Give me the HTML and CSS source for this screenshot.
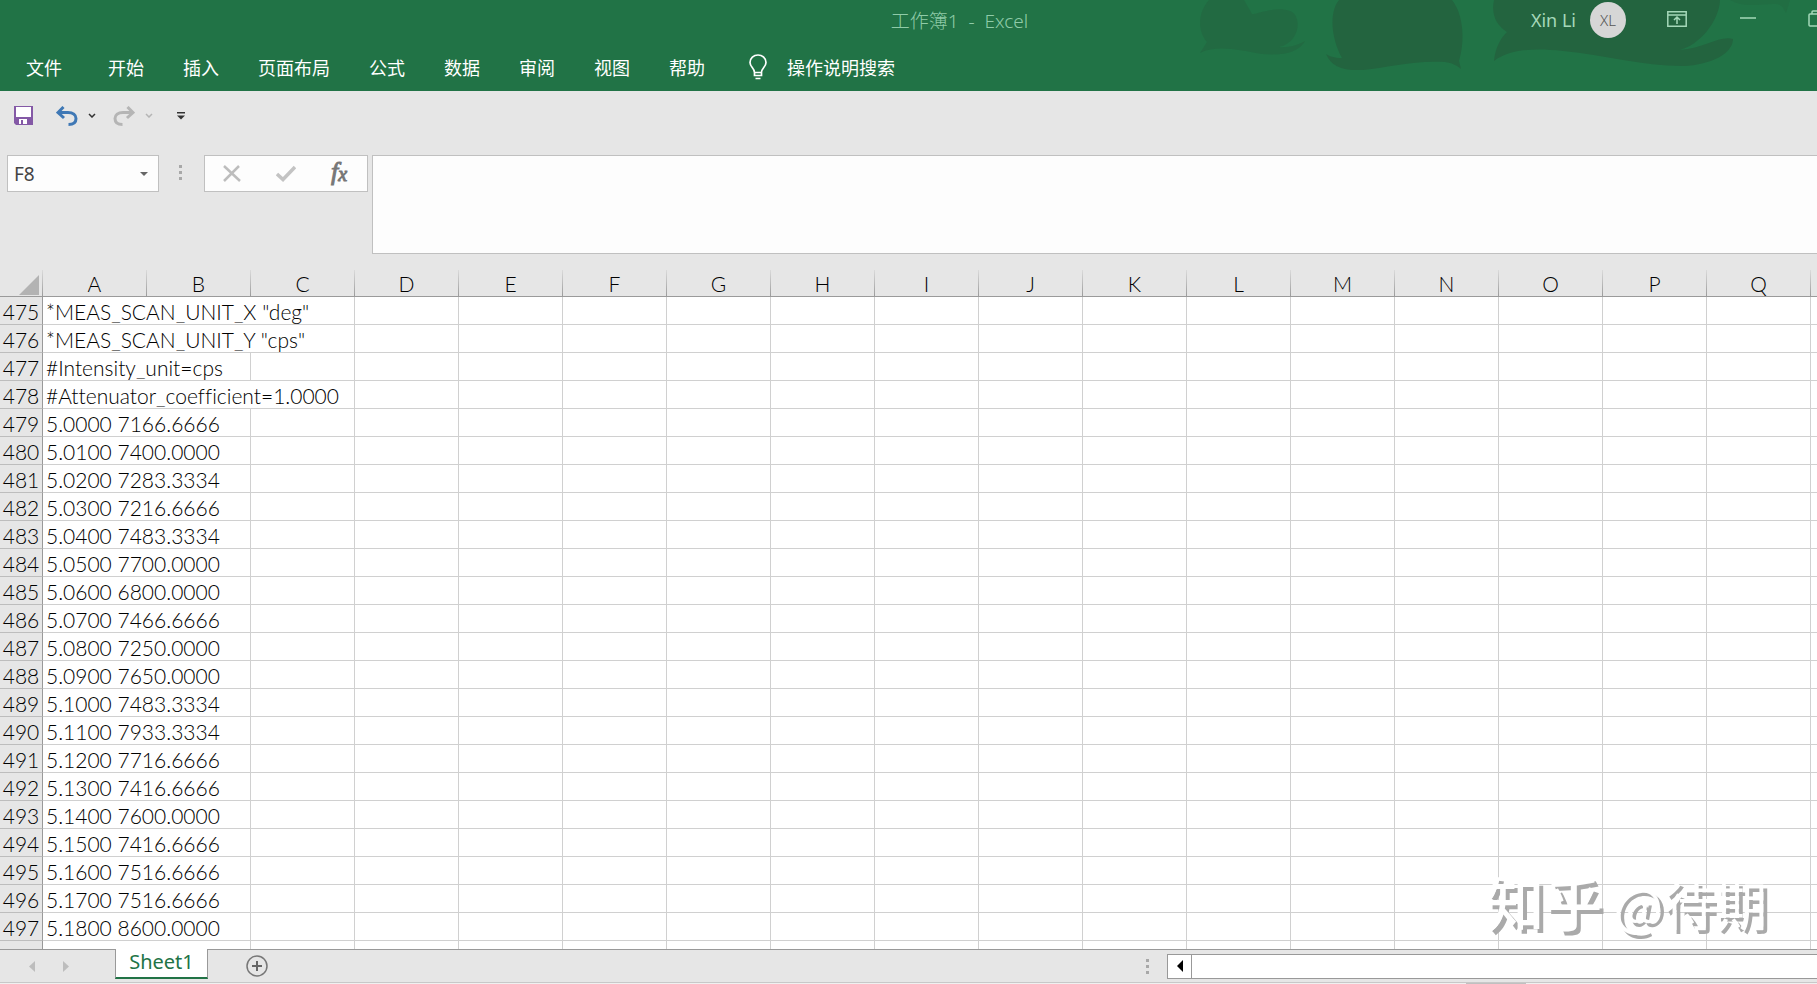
FILE: index.html
```html
<!DOCTYPE html>
<html lang="zh-CN">

<head>
  <meta charset="UTF-8" />
  <title>工作簿1 - Excel</title>
  <link rel="stylesheet" href="styles.css">
</head>

<body>
  <header class="ribbon">
    <!-- speech bubble decoration -->
    <svg class="bubbles" width="637" height="91" viewBox="0 0 637 91">
      <path opacity=".6" d="M29 0C18 12 17 31 27 42L20 53C38 44 62 51 82 54C104 56 119 52 125 41C118 45 108 48 99 47C121 42 122 15 110 11C96 6 77 14 72 14L64 0Z" />
      <path d="M159 0C149 12 151 38 162 58C154 58 149 56 146 54C151 66 162 71 183 70C210 67 235 60 265 62C272 63 276 65 281 69L279 61C285 42 284 15 272 0Z" />
      <path d="M314 0C311 14 316 25 327 32C319 40 315 50 314 61C330 49 354 48 383 51C425 55 461 66 503 66C532 65 553 53 553 39C540 35 525 48 500 50C519 45 539 22 540 0Z" />
      <path opacity=".35" d="M550 0C565 9 584 3 596 4C602 4 604 9 606 13L610 0Z" />
    </svg>

    <div class="title-bar">
      <span class="doc-title">工作簿1&nbsp; - &nbsp;Excel</span>
      <div class="account">
        <span class="user">Xin Li</span>
        <span class="avatar">XL</span>
        <button class="win-btn display" aria-label="功能区显示选项">
          <svg width="20" height="16" viewBox="0 0 20 16"><path d="M.8.8h18.4v14.4H.8zM1 4h18M10 13V6M7 9l3-3 3 3" /></svg>
        </button>
        <button class="win-btn minimize" aria-label="最小化">
          <svg width="16" height="16" viewBox="0 0 16 16"><path d="M0 7h16" /></svg>
        </button>
        <button class="win-btn restore" aria-label="还原">
          <svg width="18" height="18" viewBox="0 0 18 18"><path d="M1 5q0-1 1-1h10q1 0 1 1v10q0 1-1 1H2q-1 0-1-1zM4 4V2q0-1 1-1h10q1 0 1 1v10q0 1-1 1h-2" /></svg>
        </button>
      </div>
    </div>

    <nav class="tabs">
      <button class="file">文件</button>
      <button>开始</button>
      <button>插入</button>
      <button>页面布局</button>
      <button>公式</button>
      <button>数据</button>
      <button>审阅</button>
      <button>视图</button>
      <button>帮助</button>
      <button class="tell-me">
        <svg width="18" height="26" viewBox="0 0 18 26"><path d="M5.500 18.500C5.500 14 1 13 1 8.500a8 7.500 0 0 1 16 0C17 13 12.500 14 12.500 18.500zM5.500 18.500v3h7v-3M6.500 24.500h5" /></svg>
        操作说明搜索
      </button>
    </nav>
  </header>

  <div class="quick-access">
    <button class="save" aria-label="保存">
      <svg width="19" height="19" viewBox="0 0 19 19"><path fill="#8459a6" d="M0 0h19v19H2L0 17z" /><path fill="#fff" d="M2 1h15v10H2zM5 13h8v5H9v-4H7v4H5z" /></svg>
    </button>
    <button class="undo" aria-label="撤消">
      <svg width="22" height="20" viewBox="0 0 22 20"><path d="M7.500 1L2 6.500 8 12M2.500 6.500H12c5 0 8 2.500 8 6 0 4-3 6-7.500 6" /></svg>
    </button>
    <button class="chevron" aria-label="撤消列表">
      <svg width="8" height="5" viewBox="0 0 8 5"><path d="M1 1l3 3 3-3" /></svg>
    </button>
    <button class="redo" aria-label="恢复">
      <svg width="22" height="20" viewBox="0 0 22 20"><path d="M14.500 1L20 6.500 14 12M19.500 6.500H10c-5 0-8 2.500-8 6 0 4 3 6 7.500 6" /></svg>
    </button>
    <button class="chevron off" aria-label="恢复列表">
      <svg width="8" height="5" viewBox="0 0 8 5"><path d="M1 1l3 3 3-3" /></svg>
    </button>
    <button class="customize" aria-label="自定义快速访问工具栏">
      <svg width="8" height="8" viewBox="0 0 8 8"><path fill="#333" d="M0 0h8v1.500H0zM0 3.500h8L4 7.500z" /></svg>
    </button>
  </div>

  <div class="formula-row">
    <div class="name-box">
      <input type="text" value="F8" aria-label="名称框" />
      <button aria-label="名称列表">
        <svg width="8" height="4" viewBox="0 0 8 4"><path fill="#666" d="M0 0h8L4 4z" /></svg>
      </button>
    </div>
    <span class="grip"></span>
    <div class="formula-tools">
      <button aria-label="取消">
        <svg width="18" height="17" viewBox="0 0 18 17"><path fill="none" stroke="#bdbdbd" stroke-width="2.500" d="M1 1l16 15M16 1L1 16" /></svg>
      </button>
      <button aria-label="输入">
        <svg width="20" height="17" viewBox="0 0 20 17"><path fill="none" stroke="#c3c3c3" stroke-width="3.500" d="M1 9l6 5.500L19 2" /></svg>
      </button>
      <button class="fx" aria-label="插入函数">f<span>x</span></button>
    </div>
    <textarea class="formula" aria-label="编辑栏"></textarea>
  </div>

  <main class="grid">
    <table>
      <colgroup id="cols"></colgroup>
      <thead>
        <tr id="letters">
          <th class="corner"><svg width="20" height="20" viewBox="0 0 20 20"><path fill="#b3b3b3" d="M20 0v20H0z" /></svg></th>
        </tr>
      </thead>
      <tbody id="rows"></tbody>
    </table>
    <div class="watermark"><span>知乎</span> @待期</div>
  </main>

  <footer class="sheet-bar">
    <div class="sheet-nav">
      <button aria-label="上一个工作表"><svg width="6" height="11" viewBox="0 0 6 11"><path fill="#bdbdbd" d="M6 0v11L0 5.500z" /></svg></button>
      <button aria-label="下一个工作表"><svg width="6" height="11" viewBox="0 0 6 11"><path fill="#bdbdbd" d="M0 0v11l6-5.500z" /></svg></button>
    </div>
    <button class="sheet-tab">Sheet1</button>
    <button class="add-sheet" aria-label="新工作表">
      <svg width="22" height="22" viewBox="0 0 22 22"><circle cx="11" cy="11" r="10" fill="none" stroke="#777" stroke-width="1.500" /><path stroke="#666" stroke-width="2" d="M6 11h10M11 6v10" /></svg>
    </button>
    <span class="grip"></span>
    <div class="scroll">
      <button aria-label="向左滚动"><svg width="6" height="12" viewBox="0 0 6 12"><path d="M6 0v12L0 6z" /></svg></button>
    </div>
  </footer>
  <div class="status"><span></span></div>

  <script>
    // the last column is only partly in view and has no letter
    const letters = [..."ABCDEFGHIJKLMNOPQ", ""];
    const firstRow = 475;

    // text and how many columns it runs over
    const data = [
      ['*MEAS_SCAN_UNIT_X "deg"', 3],
      ['*MEAS_SCAN_UNIT_Y "cps"', 3],
      ["#Intensity_unit=cps", 2],
      ["#Attenuator_coefficient=1.0000", 3],
      ["5.0000 7166.6666", 2],
      ["5.0100 7400.0000", 2],
      ["5.0200 7283.3334", 2],
      ["5.0300 7216.6666", 2],
      ["5.0400 7483.3334", 2],
      ["5.0500 7700.0000", 2],
      ["5.0600 6800.0000", 2],
      ["5.0700 7466.6666", 2],
      ["5.0800 7250.0000", 2],
      ["5.0900 7650.0000", 2],
      ["5.1000 7483.3334", 2],
      ["5.1100 7933.3334", 2],
      ["5.1200 7716.6666", 2],
      ["5.1300 7416.6666", 2],
      ["5.1400 7600.0000", 2],
      ["5.1500 7416.6666", 2],
      ["5.1600 7516.6666", 2],
      ["5.1700 7516.6666", 2],
      ["5.1800 8600.0000", 2],
      ["", 2]
    ];

    document.getElementById("cols").innerHTML =
      '<col class="head-col">' + "<col>".repeat(letters.length);
    document.getElementById("letters").innerHTML +=
      letters.map(l => `<th>${l}</th>`).join("");
    document.getElementById("rows").innerHTML = data.map(([text, span], i) => `
      <tr>
        <th>${text ? firstRow + i : ""}</th>
        <td colspan="${span}">${text}</td>
        ${"<td></td>".repeat(letters.length - span)}
      </tr>`).join("");
  </script>
</body>

</html>
```
FILE: styles.css
```css
:root {
  --green: #217346;
  --green-dark: #23643f;
  --mint: #a5d8b9;
  --chrome: #e6e6e6;
  --line: #d0d0d0;
  --edge: #999;
  --ui: "Noto Sans", "Noto Sans CJK SC", sans-serif;
  --cjk: "Noto Sans CJK SC", sans-serif;
  --cell: Lato, "Noto Sans CJK SC", sans-serif;
}
* {
  box-sizing: border-box;
  margin: 0;
  padding: 0;
}
body {
  display: flex;
  flex-direction: column;
  height: 100vh;
  overflow: hidden;
  background: var(--chrome);
  font-family: var(--ui);
  font-size: 18px;
}
button {
  display: flex;
  align-items: center;
  justify-content: center;
  border: none;
  background: none;
  color: inherit;
  font: inherit;
  cursor: pointer;
}
svg {
  display: block;
  flex: none;
}

/* Green ribbon */
.ribbon {
  position: relative;
  flex: none;
  background: var(--green);
  color: #fff;
}
.bubbles {
  position: absolute;
  top: 0;
  right: 0;
  fill: var(--green-dark);
}
.title-bar {
  position: relative;
  display: grid;
  grid-template-columns: 1fr auto 1fr;
  align-items: center;
  height: 40px;
  color: var(--mint);
}
.doc-title {
  grid-column: 2;
  padding-left: 102px;
  font-size: 19px;
  font-weight: 300;
  color: #8fcba8;
}
.account {
  display: flex;
  align-items: center;
  justify-content: flex-end;
  overflow: hidden;
}
.user {
  margin-right: 14px;
}
.avatar {
  width: 36px;
  height: 36px;
  margin-right: 41px;
  border-radius: 50%;
  background: #d6d6d6;
  color: #555;
  font-size: 15px;
  font-weight: 300;
  line-height: 36px;
  text-align: center;
}
.win-btn {
  padding-bottom: 3px;
}
.win-btn svg {
  fill: none;
  stroke: var(--mint);
  stroke-width: 1.5;
}
.display {
  margin-right: 53px;
}
.minimize {
  margin-right: 52px;
}
.restore {
  margin-right: -9px;
}
.tabs {
  position: relative;
  display: flex;
  gap: 39px;
  height: 51px;
  padding: 2px 26px 0;
  font-family: var(--cjk);
}
.tabs .file {
  margin-right: 7px;
}
.tell-me {
  gap: 20px;
  margin-left: 5px;
}
.tell-me svg {
  fill: none;
  stroke: #fff;
  stroke-width: 1.7;
}

/* Quick access toolbar */
.quick-access {
  display: flex;
  flex: none;
  align-items: center;
  height: 64px;
  padding: 0 14px 15px;
}
.undo {
  margin-left: 23px;
}
.undo svg,
.redo svg {
  fill: none;
  stroke: #3f78b5;
  stroke-width: 3;
}
.redo {
  margin-left: 17px;
}
.redo svg {
  stroke: #b5b5b5;
}
.chevron {
  margin-left: 10px;
}
.chevron svg {
  fill: none;
  stroke: #333;
  stroke-width: 1.5;
}
.chevron.off svg {
  stroke: #b5b5b5;
}
.customize {
  margin-left: 24px;
}

/* Formula bar */
.formula-row {
  display: flex;
  flex: none;
  align-items: flex-start;
  height: 99px;
  padding-left: 7px;
}
.name-box,
.formula-tools,
.formula {
  border: 1px solid #c0c0c0;
  background: #fdfdfd;
}
.name-box {
  display: flex;
  width: 152px;
  height: 37px;
}
.name-box input {
  flex: 1;
  min-width: 0;
  padding-left: 6px;
  border: none;
  outline: none;
  background: none;
  color: #444;
  font: inherit;
  font-size: 19px;
}
.name-box button {
  width: 28px;
}
.grip {
  flex: none;
  width: 3px;
  height: 15px;
  background: repeating-linear-gradient(#a8a8a8 0 3px, transparent 3px 6px);
}
.formula-row .grip {
  margin: 10px 22px 0 20px;
}
.formula-tools {
  display: flex;
  width: 164px;
  height: 37px;
  padding-right: 1px;
}
.formula-tools button {
  flex: 1;
}
.formula-tools .fx {
  padding-bottom: 3px;
  color: #777;
  font-family: "Liberation Serif", serif;
  font-size: 26px;
  font-style: italic;
  -webkit-text-stroke: 1px #777;
}
.fx span {
  padding-top: 4px;
  font-size: 20px;
}
.formula {
  flex: 1;
  height: 99px;
  margin-left: 4px;
  border-right: none;
  outline: none;
  resize: none;
}

/* Cells */
.grid {
  position: relative;
  flex: 1;
  min-height: 0;
  padding-top: 16px;
  overflow: hidden;
}
.grid table {
  width: 1915px;
  border-spacing: 0;
  table-layout: fixed;
  font-family: var(--cell);
  font-size: 21px;
  font-variant-ligatures: none;
  font-weight: 300;
  line-height: 25px;
  color: #000;
}
.head-col {
  width: 43px;
}
.grid th {
  padding-top: 2px;
  font-weight: 300;
}
.grid thead th {
  height: 27px;
  border-right: 1px solid;
  border-bottom: 1px solid var(--edge);
  border-image: linear-gradient(#ddd, #999) 1;
  line-height: 24px;
}
.grid .corner svg {
  margin: 1px 0 0 19px;
}
.grid tbody th {
  border-right: 1px solid var(--edge);
  border-bottom: 1px solid #bdbdbd;
}
.grid td {
  height: 28px;
  padding: 2px 0 0 3px;
  border-right: 1px solid var(--line);
  border-bottom: 1px solid var(--line);
  background: #fff;
  white-space: nowrap;
}
.watermark {
  position: absolute;
  right: 50px;
  bottom: 8px;
  color: #fff;
  font-family: var(--cjk);
  font-size: 52px;
  line-height: 74px;
  text-shadow: 4px 4px 0 #aaa;
  pointer-events: none;
}
.watermark span {
  font-size: 58px;
  font-weight: 500;
}

/* Sheet tabs and scrollbar */
.sheet-bar {
  display: flex;
  flex: none;
  align-items: center;
  height: 33px;
  border-top: 1px solid var(--edge);
}
.sheet-nav {
  display: flex;
  gap: 28px;
  width: 115px;
  padding-left: 29px;
}
.sheet-tab {
  align-self: flex-start;
  width: 93px;
  height: 30px;
  margin-top: -1px;
  padding-bottom: 2px;
  border-right: 1px solid var(--edge);
  border-bottom: 2px solid var(--green);
  border-left: 1px solid var(--edge);
  background: #fff;
  color: var(--green);
  font-size: 20px;
  line-height: 24px;
}
.add-sheet {
  margin-left: 38px;
}
.sheet-bar .grip {
  margin-left: auto;
}
.scroll {
  display: flex;
  width: 650px;
  height: 25px;
  margin-left: 18px;
  border: 1px solid var(--edge);
  border-right: none;
  background: #fff;
}
.scroll button {
  width: 24px;
  border-right: 1px solid var(--edge);
}
.status {
  display: flex;
  flex: none;
  height: 2px;
  padding-right: 291px;
  border-top: 1px solid #c8c8c8;
  background: #f0f0f0;
}
.status span {
  width: 60px;
  margin-left: auto;
  background: #c0c0c0;
}
```
